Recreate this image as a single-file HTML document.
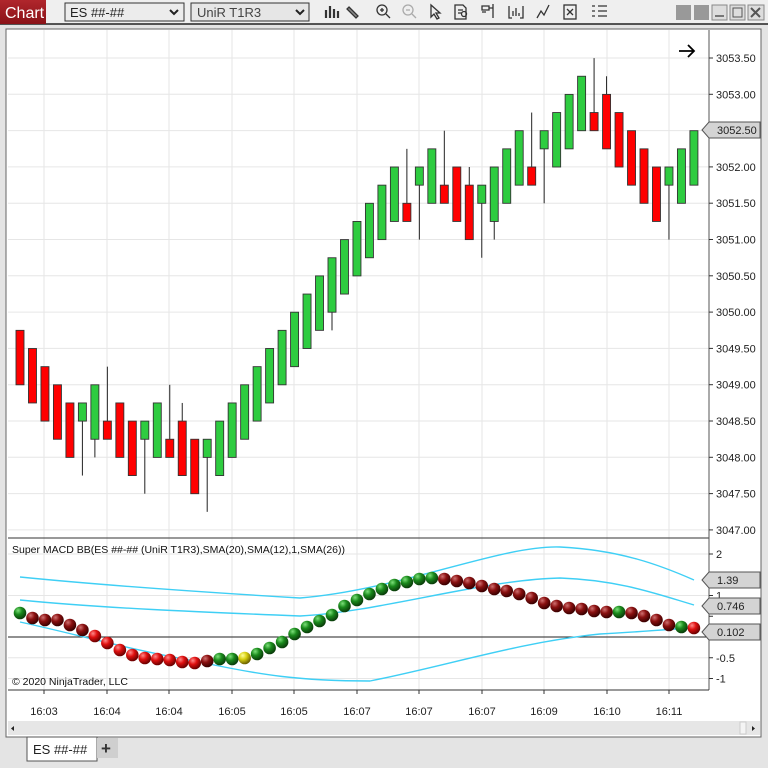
<!DOCTYPE html>
<html><head><meta charset="utf-8"><style>
html,body{margin:0;padding:0;width:768px;height:768px;overflow:hidden;background:#e4e4e4;font-family:"Liberation Sans",sans-serif}
#c{position:absolute;left:0;top:0}
</style></head><body>
<svg id="c" width="768" height="768" xmlns="http://www.w3.org/2000/svg" font-family="Liberation Sans, sans-serif">
<rect x="0" y="0" width="768" height="768" fill="#e4e4e4"/>
<rect x="0" y="0" width="768" height="24" fill="#efefef"/>
<line x1="0" y1="24" x2="768" y2="24" stroke="#222" stroke-width="1.5"/>
<defs>
<linearGradient id="rb" x1="0" y1="0" x2="0" y2="1"><stop offset="0" stop-color="#b0262c"/><stop offset="1" stop-color="#8a1218"/></linearGradient>
<radialGradient id="gG" cx="0.35" cy="0.3" r="0.7"><stop offset="0" stop-color="#7de07a"/><stop offset="0.45" stop-color="#1a8a1c"/><stop offset="1" stop-color="#0a3d0a"/></radialGradient>
<radialGradient id="gR" cx="0.35" cy="0.3" r="0.7"><stop offset="0" stop-color="#ff8a8a"/><stop offset="0.45" stop-color="#e01010"/><stop offset="1" stop-color="#6a0000"/></radialGradient>
<radialGradient id="gD" cx="0.35" cy="0.3" r="0.7"><stop offset="0" stop-color="#d07070"/><stop offset="0.45" stop-color="#8a1010"/><stop offset="1" stop-color="#3a0000"/></radialGradient>
<radialGradient id="gY" cx="0.35" cy="0.3" r="0.7"><stop offset="0" stop-color="#ffff9a"/><stop offset="0.45" stop-color="#d8d010"/><stop offset="1" stop-color="#6a6000"/></radialGradient>
</defs>
<rect x="0" y="0" width="46" height="24" fill="url(#rb)"/>
<text x="5" y="18" font-size="16" fill="#fff">Chart</text>
<rect x="65" y="3" width="119" height="18" fill="#ececec" stroke="#333"/>
<text x="70" y="17" font-size="13" fill="#222">ES ##-##</text>
<path d="M170 10 l4 4 l4 -4" stroke="#222" stroke-width="2" fill="none"/>
<rect x="191" y="3" width="118" height="18" fill="#e6e6e6" stroke="#333"/>
<text x="197" y="17" font-size="13" fill="#444">UniR T1R3</text>
<path d="M296 10 l4 4 l4 -4" stroke="#222" stroke-width="2" fill="none"/>
<g stroke="#333" fill="none" stroke-width="1.3">
<path d="M326 10v8M330 6v12M334 9v9M338 11v7" stroke-width="2.2"/>
<path d="M349 7l9 9l-2 2l-9-9z" fill="#888"/>
<circle cx="382" cy="10" r="5"/><path d="M386 14l4 4M380 10h4M382 8v4"/>
<circle cx="408" cy="10" r="5" stroke="#aaa"/><path d="M412 14l4 4M406 10h4" stroke="#aaa"/>
<path d="M431 5l0 12l3 -3l3 5l2 -1l-3 -5l4 0z"/>
<path d="M455 5h8l3 3v11h-11z M458 10h5M458 13h4"/><circle cx="464" cy="14" r="2.5"/>
<path d="M482 6h7v4h-7zM489 8h4M493 4v14M482 12h4"/>
<path d="M509 6v12h3M523 6v12h-3M513 16v-5M516 16v-8M519 16v-3"/>
<path d="M537 18l4 -7l3 4l5 -10"/>
<rect x="564" y="5" width="12" height="14"/><path d="M567 9l6 6M573 9l-6 6"/>
<path d="M592 6h3M592 11h3M592 16h3M598 6h9M598 11h9M598 16h9"/>
</g>
<rect x="676" y="5" width="15" height="15" fill="#999"/>
<rect x="694" y="5" width="15" height="15" fill="#999"/>
<rect x="712" y="5" width="15" height="15" fill="#ddd" stroke="#888"/><path d="M715 16h9" stroke="#555" stroke-width="1.5"/>
<rect x="730" y="5" width="15" height="15" fill="#ddd" stroke="#888"/><rect x="733" y="8" width="9" height="9" fill="none" stroke="#555"/>
<rect x="748" y="5" width="16" height="15" fill="#ddd" stroke="#888"/><path d="M751 8l9 9M760 8l-9 9" stroke="#555" stroke-width="2"/>
<rect x="6" y="29" width="755" height="708" fill="#fff" stroke="#666"/>
<g id="grid" stroke="#e6e6e6" stroke-width="1"></g>
<line x1="8" y1="538" x2="709" y2="538" stroke="#333"/>
<line x1="709" y1="30" x2="709" y2="690" stroke="#555"/>
<line x1="8" y1="690" x2="709" y2="690" stroke="#333"/>
<line x1="8" y1="637" x2="709" y2="637" stroke="#222"/>
<g id="paxis" font-size="11" fill="#222"></g>
<g id="candles"></g>
<path d="M679 51h14M688 45l6 6l-6 6" stroke="#000" stroke-width="1.8" fill="none"/>
<text x="12" y="553" font-size="10.5" fill="#111">Super MACD BB(ES ##-## (UniR T1R3),SMA(20),SMA(12),1,SMA(26))</text>
<text x="12" y="685" font-size="10.5" fill="#111">© 2020 NinjaTrader, LLC</text>
<g fill="none" stroke="#3fcff5" stroke-width="1.4">
<path d="M20 577 C100 585 200 592 300 598 C400 590 500 545 560 547 C620 550 660 565 694 580"/>
<path d="M20 600 C100 608 200 612 300 616 C380 612 480 580 560 578 C620 580 660 595 694 605"/>
<path d="M20 622 C80 635 130 650 200 662 C260 675 300 681 370 681 C450 665 520 642 600 634 C640 632 670 629 694 628"/>
</g>
<g id="dots"></g>
<g id="iaxis" font-size="11" fill="#222"></g>
<g id="taxis" font-size="11" fill="#222"></g>
<rect x="8" y="721" width="752" height="14" fill="#e6e6e6"/>
<path d="M14 726v5l-3 -2.5z" fill="#222"/>
<rect x="740" y="722" width="6" height="12" fill="#f4f4f4" stroke="#ccc"/>
<path d="M752 726v5l3 -2.5z" fill="#222"/>
<rect x="27" y="737" width="70" height="24" fill="#fff" stroke="#555"/>
<text x="33" y="754" font-size="13" fill="#222">ES ##-##</text>
<rect x="97" y="738" width="21" height="20" fill="#cfcfcf"/>
<text x="101" y="754" font-size="17" font-weight="bold" fill="#333">+</text>
</svg>
<script>
var NS="http://www.w3.org/2000/svg";
function el(p,t,a,txt){var e=document.createElementNS(NS,t);for(var k in a)e.setAttribute(k,a[k]);if(txt!==undefined)e.textContent=txt;document.getElementById(p).appendChild(e);return e;}
var vx=[44,107,169,232,294,357,419,482,544,607,669];
vx.forEach(function(x){el('grid','line',{x1:x,y1:30,x2:x,y2:690});});
function Y(t){return 530-t*18.15;}
for(var k=0;k<=13;k++){var y=58+k*36.3;el('grid','line',{x1:8,y1:y,x2:709,y2:y});
el('paxis','line',{x1:709,y1:y,x2:713,y2:y,stroke:'#333'});
el('paxis','text',{x:716,y:y+4},(3053.5-k*0.5).toFixed(2));}
[2,1,0.5,0,-0.5,-1].forEach(function(v){var y=637-v*41.5;if(v!==0&&v!==0.5)el('grid','line',{x1:8,y1:y,x2:709,y2:y});
el('iaxis','line',{x1:709,y1:y,x2:713,y2:y,stroke:'#333'});
if(v!==0.5&&v!==0)el('iaxis','text',{x:716,y:y+4},String(v));});
var labs=["16:03","16:04","16:04","16:05","16:05","16:07","16:07","16:07","16:09","16:10","16:11"];
vx.forEach(function(x,i){el('taxis','line',{x1:x,y1:690,x2:x,y2:694,stroke:'#333'});el('taxis','text',{x:x,y:715,'text-anchor':'middle'},labs[i]);});
var C=[[11,8],[10,7],[9,6],[8,5],[7,4],[6,7,null,3],[5,8,null,4],[6,5,9],[7,4],[6,3],[5,6,null,2],[4,7],[5,4,8],[6,3,7],[5,2],[4,5,null,1],[3,6],[4,7],[5,8],[6,9],
[7,10],[8,11],[9,12],[10,13],[11,14],[12,15,null,11],[13,16],[14,17],[15,18],[16,19],
[17,20],[18,17,21],[19,20,null,16],[18,21],[19,18,22],[20,17],[19,16,20],[18,19,null,15],[17,20,null,16],[18,21],[19,22],[20,19,23],[21,22,null,18],[20,23],[21,24],[22,25],[23,22,26],[24,21,25],[23,20],[22,19],[21,18],[20,17],[19,20,null,16],[18,21],[19,22]];
C.forEach(function(c,i){var x=20+i*12.48;var o=c[0],cl=c[1];var hi=Math.max(o,cl),lo=Math.min(o,cl);
if(c[2])el('candles','line',{x1:x,y1:Y(c[2]),x2:x,y2:Y(hi),stroke:'#222'});
if(c[3])el('candles','line',{x1:x,y1:Y(lo),x2:x,y2:Y(c[3]),stroke:'#222'});
el('candles','rect',{x:x-4,y:Y(hi),width:8,height:Y(lo)-Y(hi),fill:cl>o?'#2ecc40':'#ff0000',stroke:'#333','stroke-width':0.9});});
var D=[613,618,620,620,625,630,636,643,650,655,658,659,660,662,663,661,659,659,658,654,648,642,634,627,621,615,606,600,594,589,585,582,579,578,579,581,583,586,589,591,594,598,603,606,608,609,611,612,612,613,616,620,625,627,628];
var col="GDDDDDRRRRRRRRRDGGYGGGGGGGGGGGGGGGDDDDDDDDDDDDDDGDDDDGR";
D.forEach(function(y,i){var x=20+i*12.48;var f={G:'url(#gG)',R:'url(#gR)',D:'url(#gD)',Y:'url(#gY)'}[col[i]];
el('dots','circle',{cx:x,cy:y,r:6.3,fill:f});});
function tag(y,t){el('iaxis','path',{d:'M702 '+y+' l7 -8 h51 v16 h-51 z',fill:'#d4d4d4',stroke:'#555'});el('iaxis','text',{x:717,y:y+4},t);}
tag(130,'3052.50');tag(580,'1.39');tag(606,'0.746');tag(632,'0.102');
</script>
</body></html>
